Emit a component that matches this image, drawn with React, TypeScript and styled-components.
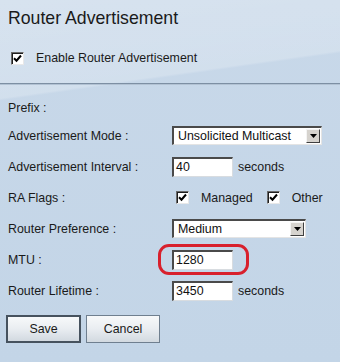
import * as React from "react";
import styled, { createGlobalStyle } from "styled-components";

const GlobalStyle = createGlobalStyle`
  html, body {
    margin: 0;
    padding: 0;
  }
  body {
    font-family: "Liberation Sans", Arial, sans-serif;
    color: #1a1a1a;
  }
`;

const Page = styled.div`
  width: 340px;
  height: 362px;
  overflow: hidden;
  background:
    linear-gradient(172deg, rgba(255, 255, 255, 0.28) 0%, rgba(255, 255, 255, 0.2) 24%, rgba(255, 255, 255, 0) 24.6%),
    linear-gradient(180deg, #c8d8e9 0%, #c3d5e7 100%);
`;

const Title = styled.h1`
  margin: 0;
  padding: 7px 0 0 8px;
  height: 30px;
  box-sizing: border-box;
  font-size: 17.7px;
  font-weight: normal;
  line-height: 22px;
`;

const EnableRow = styled.div`
  display: flex;
  align-items: center;
  height: 22px;
  margin-top: 17px;
  padding-left: 11px;
  font-size: 12.4px;
  gap: 12px;
`;

const Divider = styled.div`
  height: 1px;
  margin-top: 14px;
  background: #7d8fa3;
  border-bottom: 1px solid #b2c2d3;
`;

const Form = styled.div`
  padding: 13px 0 0 8px;
  font-size: 12.4px;
`;

const PrefixRow = styled.div`
  height: 22px;
  line-height: 20px;
`;

const Row = styled.div`
  display: flex;
  align-items: center;
  height: 31px;
`;

const Label = styled.div`
  width: 164px;
  flex: none;
`;

const Field = styled.div<{ $indent?: number }>`
  display: flex;
  align-items: center;
  position: relative;
  padding-left: ${(p) => p.$indent ?? 0}px;
`;

const Box = styled.span`
  width: 13px;
  height: 13px;
  box-sizing: border-box;
  flex: none;
  background: #fff;
  border-top: 1px solid #6a6a6a;
  border-left: 1px solid #6a6a6a;
  border-right: 1px solid #e8e8e8;
  border-bottom: 1px solid #e8e8e8;
  box-shadow: inset 1px 1px 0 #1e1e1e;
  display: flex;
  align-items: center;
  justify-content: center;
`;

const FlagLabel = styled.span`
  margin: 0 14px 0 12px;
`;

const TextBox = styled.div`
  width: 61px;
  height: 20px;
  box-sizing: border-box;
  background: #fff;
  border-top: 2px solid #4a4a4a;
  border-left: 2px solid #4a4a4a;
  border-right: 1px solid #d8dce0;
  border-bottom: 1px solid #d8dce0;
  padding-left: 2px;
  line-height: 17px;
  color: #111;
`;

const Unit = styled.span`
  margin-left: 5px;
`;

const Select = styled.div<{ $width: number }>`
  width: ${(p) => p.$width}px;
  height: 19px;
  box-sizing: border-box;
  background: #fff;
  border-top: 2px solid #4a4a4a;
  border-left: 2px solid #4a4a4a;
  border-right: 1px solid #e4e4e4;
  border-bottom: 1px solid #e4e4e4;
  display: flex;
  align-items: center;
  padding-left: 4px;
  color: #111;
`;

const SelectText = styled.span`
  flex: 1;
`;

const Arrow = styled.span`
  width: 14px;
  height: 14px;
  box-sizing: border-box;
  margin-right: 1px;
  background: #d6d3ce;
  border-top: 1px solid #f4f4f4;
  border-left: 1px solid #f4f4f4;
  border-right: 1px solid #404040;
  border-bottom: 1px solid #404040;
  display: flex;
  align-items: center;
  justify-content: center;
`;

const Highlight = styled.div`
  position: absolute;
  left: -14px;
  top: -6px;
  width: 91px;
  height: 31px;
  box-sizing: border-box;
  border: 3px solid #d8202c;
  border-radius: 11px;
  pointer-events: none;
`;

const Buttons = styled.div`
  display: flex;
  gap: 5px;
  padding: 9px 0 0 6px;
`;

const Button = styled.button<{ $primary?: boolean }>`
  width: ${(p) => (p.$primary ? 75 : 74)}px;
  height: 28px;
  font-family: "Liberation Sans", Arial, sans-serif;
  font-size: 12.4px;
  color: #1a1a1a;
  background: linear-gradient(180deg, #f7f9fa 0%, #e9edf1 50%, #d2d9e0 100%);
  border: ${(p) => (p.$primary ? "2px solid #46525e" : "1px solid #6f7f8f")};
  border-radius: 0;
  padding: 0;
`;

function Check() {
  return (
    <Box>
      <svg width="9" height="9" viewBox="0 0 9 9">
        <path d="M1 4.2 L3.5 6.7 L8 1.5" stroke="#000" strokeWidth="2" fill="none" />
      </svg>
    </Box>
  );
}

function DropArrow() {
  return (
    <Arrow>
      <svg width="7" height="4" viewBox="0 0 7 4">
        <path d="M0 0 H7 L3.5 4 Z" fill="#000" />
      </svg>
    </Arrow>
  );
}

export default function App() {
  return (
    <Page>
      <GlobalStyle />
      <Title>Router Advertisement</Title>
      <EnableRow>
        <Check />
        <span>Enable Router Advertisement</span>
      </EnableRow>
      <Divider />
      <Form>
        <PrefixRow>Prefix :</PrefixRow>
        <Row>
          <Label>Advertisement Mode :</Label>
          <Select $width={150}>
            <SelectText>Unsolicited Multicast</SelectText>
            <DropArrow />
          </Select>
        </Row>
        <Row>
          <Label>Advertisement Interval :</Label>
          <Field>
            <TextBox>40</TextBox>
            <Unit>seconds</Unit>
          </Field>
        </Row>
        <Row>
          <Label>RA Flags :</Label>
          <Field $indent={4}>
            <Check />
            <FlagLabel>Managed</FlagLabel>
            <Check />
            <FlagLabel>Other</FlagLabel>
          </Field>
        </Row>
        <Row>
          <Label>Router Preference :</Label>
          <Select $width={134}>
            <SelectText>Medium</SelectText>
            <DropArrow />
          </Select>
        </Row>
        <Row>
          <Label>MTU :</Label>
          <Field>
            <TextBox>1280</TextBox>
            <Highlight />
          </Field>
        </Row>
        <Row>
          <Label>Router Lifetime :</Label>
          <Field>
            <TextBox>3450</TextBox>
            <Unit>seconds</Unit>
          </Field>
        </Row>
      </Form>
      <Buttons>
        <Button $primary>Save</Button>
        <Button>Cancel</Button>
      </Buttons>
    </Page>
  );
}
